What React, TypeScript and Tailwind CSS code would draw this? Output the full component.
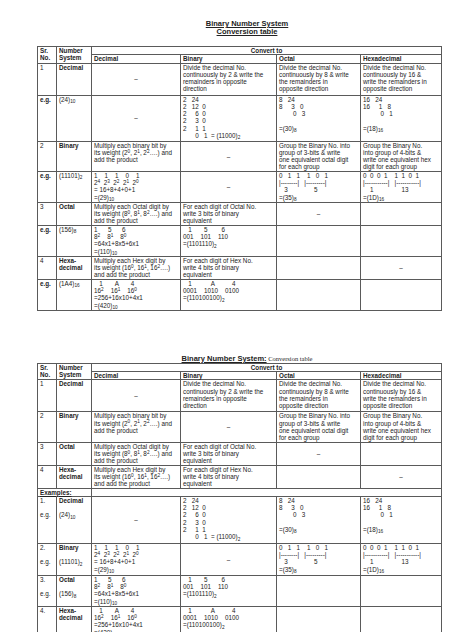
import React from 'react';

const base = 'border border-[#5a5a5a] px-[2px] py-0 leading-[7.3px]';
const cell = `${base} align-top text-left`;
const dash = `${base} align-middle text-center`;

const Dash = () => <td className={dash}>–</td>;
const Empty = () => <td className={cell}></td>;

const Pre: React.FC<{ children: React.ReactNode }> = ({ children }) => (
  <div className="whitespace-pre">{children}</div>
);

const Header = () => (
  <>
    <tr className="h-[8px]">
      <th rowSpan={2} className={`${cell} font-bold`}>Sr.<br />No.</th>
      <th rowSpan={2} className={`${cell} font-bold`}>Number<br />System</th>
      <th colSpan={4} className={`${base} align-top text-center font-bold`}>Convert to</th>
    </tr>
    <tr className="h-[8px]">
      <th className={`${cell} font-bold`}>Decimal</th>
      <th className={`${cell} font-bold`}>Binary</th>
      <th className={`${cell} font-bold`}>Octal</th>
      <th className={`${cell} font-bold`}>Hexadecimal</th>
    </tr>
  </>
);

const Cols = () => (
  <colgroup>
    <col className="w-[19px]" />
    <col className="w-[35px]" />
    <col className="w-[89px]" />
    <col className="w-[96px]" />
    <col className="w-[84px]" />
    <col className="w-[81px]" />
  </colgroup>
);

// method rows
const DecimalRule = ({ sr }: { sr: string }) => (
  <tr className="h-[32px]">
    <td className={cell}>{sr}</td>
    <td className={`${cell} font-bold`}>Decimal</td>
    <Dash />
    <td className={cell}>Divide the decimal No.<br />continuously by 2 &amp; write the<br />remainders in opposite<br />direction</td>
    <td className={cell}>Divide the decimal No.<br />continuously by 8 &amp; write<br />the remainders in<br />opposite direction</td>
    <td className={cell}>Divide the decimal No.<br />continuously by 16 &amp;<br />write the remainders in<br />opposite direction</td>
  </tr>
);

const BinaryRule = ({ sr }: { sr: string }) => (
  <tr className="h-[30px]">
    <td className={cell}>{sr}</td>
    <td className={`${cell} font-bold`}>Binary</td>
    <td className={cell}>Multiply each binary bit by<br />its weight (2<sup>0</sup>, 2<sup>1</sup>, 2<sup>2</sup>….) and<br />add the product</td>
    <Dash />
    <td className={cell}>Group the Binary No. into<br />group of 3-bits &amp; write<br />one equivalent octal digit<br />for each group</td>
    <td className={cell}>Group the Binary No.<br />into group of 4-bits &amp;<br />write one equivalent hex<br />digit for each group</td>
  </tr>
);

const OctalRule = ({ sr }: { sr: string }) => (
  <tr className="h-[23px]">
    <td className={cell}>{sr}</td>
    <td className={`${cell} font-bold`}>Octal</td>
    <td className={cell}>Multiply each Octal digit by<br />its weight (8<sup>0</sup>, 8<sup>1</sup>, 8<sup>2</sup>….) and<br />add the product</td>
    <td className={cell}>For each digit of  Octal No.<br />write 3 bits of binary<br />equivalent</td>
    <Dash />
    <Empty />
  </tr>
);

const HexRule = ({ sr }: { sr: string }) => (
  <tr className="h-[23px]">
    <td className={cell}>{sr}</td>
    <td className={`${cell} font-bold`}>Hexa-<br />decimal</td>
    <td className={cell}>Multiply each Hex digit by<br />its weight (16<sup>0</sup>, 16<sup>1</sup>, 16<sup>2</sup>….)<br />and add the product</td>
    <td className={cell}>For each digit of  Hex No.<br />write 4 bits of binary<br />equivalent</td>
    <Empty />
    <Dash />
  </tr>
);

// example cells
const DecBin = () => (
  <td className={cell}>
    <Pre>{'2   24\n2   12  0\n2     6  0\n2     3  0\n2     1  1\n       0   1  = (11000)'}<sub>2</sub></Pre>
  </td>
);
const DecOct = () => (
  <td className={cell}>
    <Pre>{'8   24\n8     3   0\n        0   3\n\n=(30)'}<sub>8</sub></Pre>
  </td>
);
const DecHex = () => (
  <td className={cell}>
    <Pre>{'16   24\n16     1   8\n          0   1\n\n=(18)'}<sub>16</sub></Pre>
  </td>
);
const BinDec = () => (
  <td className={cell}>
    <Pre>
      {'1    1    1    0    1\n'}
      2<sup>4</sup>{'  '}2<sup>3</sup>{'  '}2<sup>2</sup>{'  '}2<sup>1</sup>{'  '}2<sup>0</sup>
      {'\n= 16+8+4+0+1\n=(29)'}<sub>10</sub>
    </Pre>
  </td>
);
const BinOct = () => (
  <td className={cell}>
    <Pre>{'0   1   1    1   0   1\n|--------|   |---------|\n   3               5\n=(35)'}<sub>8</sub></Pre>
  </td>
);
const BinHex = () => (
  <td className={cell}>
    <Pre>{'0  0  0  1    1  1  0  1\n|-----------|   |-----------|\n    1                13\n=(1D)'}<sub>16</sub></Pre>
  </td>
);
const OctDec = () => (
  <td className={cell}>
    <Pre>
      {'1      5      6\n'}
      8<sup>2</sup>{'    '}8<sup>1</sup>{'    '}8<sup>0</sup>
      {'\n=64x1+8x5+6x1\n=(110)'}<sub>10</sub>
    </Pre>
  </td>
);
const OctBin = () => (
  <td className={cell}>
    <Pre>{'   1       5        6\n001    101    110\n=(1101110)'}<sub>2</sub></Pre>
  </td>
);
const HexDec = () => (
  <td className={cell}>
    <Pre>
      {'   1       A       4\n'}
      16<sup>2</sup>{'    '}16<sup>1</sup>{'    '}16<sup>0</sup>
      {'\n=256+16x10+4x1\n=(420)'}<sub>10</sub>
    </Pre>
  </td>
);
const HexBin = () => (
  <td className={cell}>
    <Pre>{'   1           A          4\n0001    1010    0100\n=(110100100)'}<sub>2</sub></Pre>
  </td>
);

const Table1 = () => (
  <table className="table-fixed border-collapse w-[404px] ml-[37px]">
    <Cols />
    <tbody>
      <Header />
      <DecimalRule sr="1" />
      <tr className="h-[46px]">
        <td className={`${cell} font-bold`}>e.g.</td>
        <td className={cell}>(24)<sub>10</sub></td>
        <Dash />
        <DecBin />
        <DecOct />
        <DecHex />
      </tr>
      <BinaryRule sr="2" />
      <tr className="h-[31px]">
        <td className={`${cell} font-bold`}>e.g.</td>
        <td className={cell}>(11101)<sub>2</sub></td>
        <BinDec />
        <Dash />
        <BinOct />
        <BinHex />
      </tr>
      <OctalRule sr="3" />
      <tr className="h-[31px]">
        <td className={`${cell} font-bold`}>e.g.</td>
        <td className={cell}>(156)<sub>8</sub></td>
        <OctDec />
        <OctBin />
        <Empty />
        <Empty />
      </tr>
      <HexRule sr="4" />
      <tr className="h-[31px]">
        <td className={`${cell} font-bold`}>e.g.</td>
        <td className={cell}>(1A4)<sub>16</sub></td>
        <HexDec />
        <HexBin />
        <Empty />
        <Empty />
      </tr>
    </tbody>
  </table>
);

const ExLabel = ({ n, name, value }: { n: string; name: React.ReactNode; value: React.ReactNode }) => (
  <>
    <td className={cell}><Pre>{`${n}\n\ne.g.`}</Pre></td>
    <td className={cell}>
      <div className="font-bold">{name}</div>
      <div className="mt-[7.3px]">{value}</div>
    </td>
  </>
);

const Table2 = () => (
  <table className="table-fixed border-collapse w-[404px] ml-[37px]">
    <Cols />
    <tbody>
      <Header />
      <DecimalRule sr="1" />
      <BinaryRule sr="2" />
      <OctalRule sr="3" />
      <HexRule sr="4" />
      <tr className="h-[7px]">
        <td colSpan={2} className={`${cell} font-bold underline`}>Examples:</td>
        <td colSpan={4} className={cell}></td>
      </tr>
      <tr className="h-[47px]">
        <ExLabel n="1." name="Decimal" value={<>(24)<sub>10</sub></>} />
        <Dash />
        <DecBin />
        <DecOct />
        <DecHex />
      </tr>
      <tr className="h-[32px]">
        <ExLabel n="2." name="Binary" value={<>(11101)<sub>2</sub></>} />
        <BinDec />
        <Dash />
        <BinOct />
        <BinHex />
      </tr>
      <tr className="h-[31px]">
        <ExLabel n="3." name="Octal" value={<>(156)<sub>8</sub></>} />
        <OctDec />
        <OctBin />
        <Empty />
        <Empty />
      </tr>
      <tr className="h-[32px]">
        <td className={cell}>4.</td>
        <td className={`${cell} font-bold`}>Hexa-<br />decimal</td>
        <HexDec />
        <HexBin />
        <Empty />
        <Empty />
      </tr>
    </tbody>
  </table>
);

export default function App() {
  return (
    <div className="w-[474px] h-[632px] overflow-hidden bg-white text-[#222] text-[6.3px] font-['Liberation_Sans',Arial,sans-serif]">
      <div className="pt-[20px] pl-[20px] text-center font-bold text-[7.5px] leading-[8px] underline">
        <div>Binary Number System</div>
        <div>Conversion table</div>
      </div>
      <div className="mt-[10px]">
        <Table1 />
      </div>
      <div className="mt-[44px] pl-[20px] text-center leading-[8px]">
        <span className="font-bold text-[7.5px] underline">Binary Number System:</span>
        <span className="font-['Liberation_Serif',serif] text-[6.5px]">  Conversion table</span>
      </div>
      <Table2 />
    </div>
  );
}
